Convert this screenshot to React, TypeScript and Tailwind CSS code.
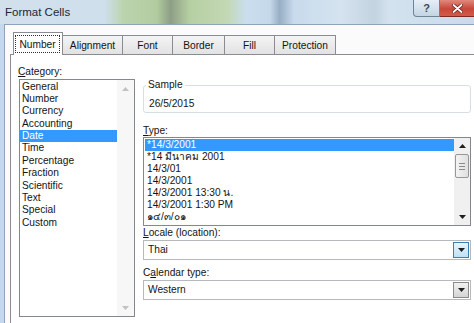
import React from "react";

const CATEGORIES = [
  "General",
  "Number",
  "Currency",
  "Accounting",
  "Date",
  "Time",
  "Percentage",
  "Fraction",
  "Scientific",
  "Text",
  "Special",
  "Custom",
];

const TYPES = [
  "*14/3/2001",
  "*14 มีนาคม 2001",
  "14/3/01",
  "14/3/2001",
  "14/3/2001 13:30 น.",
  "14/3/2001 1:30 PM",
  "๑๔/๓/๐๑",
];

// widths taken from the dialog, tab by tab
const TABS = [
  { label: "Number", w: "w-[50px]" },
  { label: "Alignment", w: "w-[61px]" },
  { label: "Font", w: "w-[51px]" },
  { label: "Border", w: "w-[53px]" },
  { label: "Fill", w: "w-[51px]" },
  { label: "Protection", w: "w-[62px]" },
];

function Arrow({ up, dim }: { up?: boolean; dim?: boolean }) {
  return (
    <svg width="7" height="4" viewBox="0 0 7 4">
      <path d={up ? "M0 4 L3.5 0 L7 4 Z" : "M0 0 L7 0 L3.5 4 Z"} fill={dim ? "#c2c2c2" : "#202020"} />
    </svg>
  );
}

function TitleBar() {
  return (
    <div className="flex h-[24px] shrink-0 items-start justify-between bg-[linear-gradient(90deg,#d2e0ec_0%,#cfdfec_22%,#bcd4ae_26%,#b3cc9f_33%,#8d9f86_36%,#b6cfa2_40%,#c3d8b4_48%,#cadef0_52%,#c5d8ea_57%,#98aec4_59%,#c8dbec_62%,#d5e3ef_72%,#c3d3e0_79%,#d3e2ee_82%,#c9dbea_100%)]">
      <div className="pl-[5px] pt-[5px] text-[11.5px] leading-[14px] text-[#1c2733]">Format Cells</div>
      <div className="flex">
        <div className="flex h-[17px] w-[27px] items-center justify-center rounded-bl-[4px] border border-t-0 border-[#6f8397] bg-[linear-gradient(#e6eef6,#c4d4e4)] text-[11px] font-bold leading-none text-[#3a4a5c]">
          ?
        </div>
        <div className="flex h-[17px] w-[34px] items-center justify-center border-b border-[#7d2a22] bg-[linear-gradient(#e0897c,#c8473a_55%,#d35a48)]">
          <svg width="11" height="9" viewBox="0 0 11 9">
            <path d="M1.5 1 L9.5 8 M9.5 1 L1.5 8" stroke="#5a1a14" strokeWidth="3.2" strokeLinecap="round" />
            <path d="M1.5 1 L9.5 8 M9.5 1 L1.5 8" stroke="#ffffff" strokeWidth="1.8" strokeLinecap="round" />
          </svg>
        </div>
      </div>
    </div>
  );
}

function Tabs() {
  return (
    <div className="flex h-[29px] shrink-0 items-end pl-[8px]">
      {TABS.map((t, i) =>
        i === 0 ? (
          <div
            key={t.label}
            className={`relative z-10 -mb-px flex h-[23px] ${t.w} items-start border border-b-0 border-[#898c95] bg-white pl-[1px] pr-[2px] pt-[2px]`}
          >
            <div className="flex h-[18px] flex-1 items-center justify-center border border-dotted border-[#303030] pt-[1px]">
              {t.label}
            </div>
          </div>
        ) : (
          <div
            key={t.label}
            className={`-mb-px -ml-px flex h-[20px] ${t.w} items-center justify-center border border-[#898c95] bg-[linear-gradient(#f4f4f4,#e2e2e2)] pt-[2px]`}
          >
            {t.label}
          </div>
        )
      )}
    </div>
  );
}

function CategoryList() {
  return (
    <div className="mt-[1px] flex h-[238px] w-[116px] border border-[#828790] bg-white">
      <div className="flex-1 pt-[0.5px]">
        {CATEGORIES.map((c) => (
          <div
            key={c}
            className={`h-[12.4px] pl-[2px] leading-[12.4px] ${c === "Date" ? "bg-[#3399ff] text-white" : ""}`}
          >
            {c}
          </div>
        ))}
      </div>
      <div className="flex w-[17px] flex-col bg-[#f7f7f7]">
        <div className="flex h-[17px] items-center justify-center">
          <Arrow up dim />
        </div>
        <div className="flex-1" />
        <div className="flex h-[17px] items-center justify-center">
          <Arrow dim />
        </div>
      </div>
    </div>
  );
}

function TypeList() {
  return (
    <div className="flex h-[89px] border border-[#828790] bg-white">
      <div className="flex-1 pl-[1px] pt-[0.5px]">
        {TYPES.map((t, i) => (
          <div
            key={t}
            className={`h-[12.1px] whitespace-nowrap pl-[2px] leading-[12.1px] ${i === 0 ? "bg-[#3399ff] text-white" : ""}`}
          >
            {t}
          </div>
        ))}
      </div>
      <div className="flex w-[16px] flex-col bg-[#f0f0f0]">
        <div className="flex h-[16px] items-center justify-center">
          <Arrow up />
        </div>
        <div className="flex flex-1 flex-col">
          <div className="mx-[1px] flex h-[24px] flex-col items-center justify-center gap-[2px] rounded-[2px] border border-[#979797] bg-[linear-gradient(90deg,#f3f3f3,#e0e0e0)]">
            <div className="h-px w-[6px] bg-[#8a8a8a]" />
            <div className="h-px w-[6px] bg-[#8a8a8a]" />
            <div className="h-px w-[6px] bg-[#8a8a8a]" />
          </div>
        </div>
        <div className="flex h-[16px] items-center justify-center">
          <Arrow />
        </div>
      </div>
    </div>
  );
}

function Combo({ value, hot }: { value: string; hot?: boolean }) {
  return (
    <div className="mt-[1px] flex h-[20px] items-stretch border border-[#b7b9bd] bg-white p-px">
      <div className="flex flex-1 items-center pl-[3px]">{value}</div>
      <div
        className={`flex w-[16px] items-center justify-center border ${
          hot
            ? "border-[#3c7fb1] bg-[linear-gradient(#e8f5fc,#bfe2f6)]"
            : "border-[#8a8a8a] bg-[linear-gradient(#f2f2f2,#d4d4d4)]"
        }`}
      >
        <Arrow />
      </div>
    </div>
  );
}

export default function App() {
  return (
    <div className="flex h-[323px] w-[474px] flex-col overflow-hidden bg-[#c6d9ec] font-['Liberation_Sans',Arial,sans-serif] text-[10.2px] text-[#141414]">
      <TitleBar />
      <div className="ml-[4px] flex flex-1 flex-col border-l border-t border-[#8ea3b8] bg-[#fbfbfb]">
        <Tabs />
        <div className="ml-[5px] flex w-[480px] flex-1 gap-[8px] border-l border-t border-[#898c95] bg-white pl-[7px]">
          <div className="flex flex-col pt-[10px]">
            <div className="h-[13px] leading-[13px]">
              <span className="underline">C</span>ategory:
            </div>
            <div className="pl-px">
              <CategoryList />
            </div>
          </div>

          <div className="flex w-[328px] flex-col pt-[24px]">
            <fieldset className="rounded-[3px] border border-[#d5dfe5]">
              <legend className="ml-[2px] px-[2px] leading-[12px]">Sample</legend>
              <div className="pb-[2px] pl-[5px] pt-[7px] leading-[12px]">26/5/2015</div>
            </fieldset>

            <div className="mt-[12px] h-[12px] leading-[12px]">
              <span className="underline">T</span>ype:
            </div>
            <TypeList />

            <div className="mt-[1px] h-[12px] leading-[12px]">
              <span className="underline">L</span>ocale (location):
            </div>
            <Combo value="Thai" hot />

            <div className="mt-[7px] h-[12px] leading-[12px]">
              C<span className="underline">a</span>lendar type:
            </div>
            <Combo value="Western" />
          </div>
        </div>
      </div>
    </div>
  );
}
